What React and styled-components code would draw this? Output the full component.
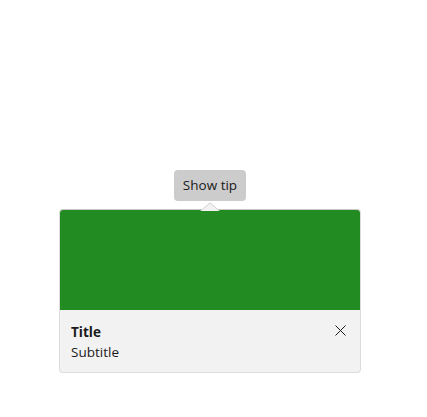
import React from "react";
import styled, { createGlobalStyle } from "styled-components";

const GlobalStyle = createGlobalStyle`
  body {
    margin: 0;
    background: #ffffff;
    font-family: "Open Sans", "Noto Sans", "Liberation Sans", sans-serif;
  }
`;

const Stage = styled.div`
  width: 420px;
  padding-top: 170px;
  display: flex;
  flex-direction: column;
  align-items: center;
`;

const TipButton = styled.button`
  height: 31px;
  width: 72px;
  padding: 0;
  border: none;
  border-radius: 4px;
  background: #cccccc;
  color: #1a1a1a;
  font-family: inherit;
  font-size: 13.5px;
  line-height: 31px;
  margin-bottom: 8px;
`;

const Tip = styled.div`
  position: relative;
  width: 302px;
  box-sizing: border-box;
  border: 1px solid #dcdcdc;
  border-top-color: #c8c8c8;
  border-radius: 4px;
  background: #f2f2f2;
`;

const Beak = styled.svg`
  position: absolute;
  top: -8px;
  left: 50%;
  margin-left: -10px;
`;

const Hero = styled.div`
  height: 100px;
  background: #228b22;
  border-radius: 3px 3px 0 0;
`;

const Body = styled.div`
  display: flex;
  justify-content: space-between;
  align-items: flex-start;
  padding: 12px 11px 10px;
`;

const Texts = styled.div`
  display: flex;
  flex-direction: column;
  color: #1a1a1a;
  font-size: 13.5px;
  line-height: 20px;
`;

const Title = styled.span`
  font-weight: 700;
`;

const CloseButton = styled.button`
  border: none;
  background: none;
  padding: 0;
  margin: 3px 3px 0 0;
  width: 11px;
  height: 11px;
  display: flex;
`;

export default function App() {
  return (
    <>
      <GlobalStyle />
      <Stage>
        <TipButton>Show tip</TipButton>
        <Tip>
          <Beak width="20" height="9" viewBox="0 0 20 9">
            <path d="M0.5 9 L10 0.8 L19.5 9" fill="#f2f2f2" stroke="#d0d0d0" strokeWidth="1" />
          </Beak>
          <Hero />
          <Body>
            <Texts>
              <Title>Title</Title>
              <span>Subtitle</span>
            </Texts>
            <CloseButton aria-label="Close">
              <svg width="11" height="11" viewBox="0 0 11 11">
                <path d="M0.5 0.5 L10.5 10.5 M10.5 0.5 L0.5 10.5" stroke="#1a1a1a" strokeWidth="1" />
              </svg>
            </CloseButton>
          </Body>
        </Tip>
      </Stage>
    </>
  );
}
